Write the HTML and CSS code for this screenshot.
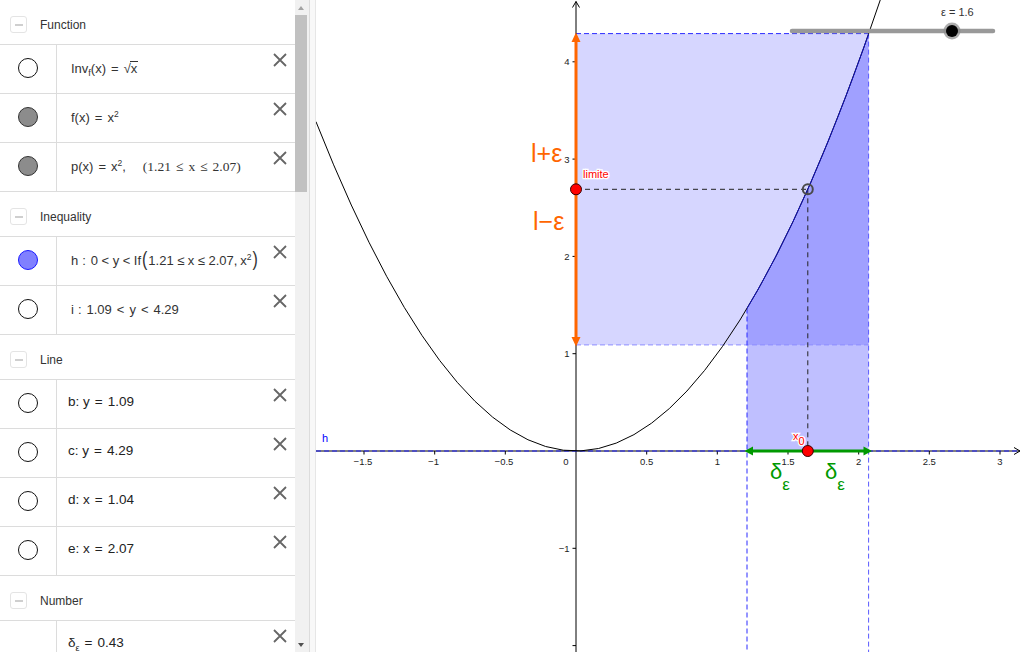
FILE: index.html
```html
<!DOCTYPE html>
<html>
<head>
<meta charset="utf-8">
<title>Limit</title>
<link rel="stylesheet" href="styles.css">
</head>
<body>
<div class="algebra">
  <div class="group-head"><span class="toggle"></span><span class="group-title">Function</span></div>
  <div class="item">
    <div class="marble-cell"><span class="marble"></span></div>
    <div class="expr"><span class="math">Inv<sub>f</sub>(x)<span class="rel">=</span><span class="rad">√<span class="ov">x</span></span></span></div>
    <svg class="del" viewBox="0 0 14 14"><path d="M1 1L13 13M13 1L1 13"/></svg>
  </div>
  <div class="item">
    <div class="marble-cell"><span class="marble gray"></span></div>
    <div class="expr"><span class="math">f(x)<span class="rel">=</span>x<sup>2</sup></span></div>
    <svg class="del" viewBox="0 0 14 14"><path d="M1 1L13 13M13 1L1 13"/></svg>
  </div>
  <div class="item">
    <div class="marble-cell"><span class="marble gray"></span></div>
    <div class="expr"><span class="math">p(x)<span class="rel">=</span>x<sup>2</sup>,<span class="gap"></span><span class="serif">(1.21<span class="rel">≤</span>x<span class="rel">≤</span>2.07)</span></span></div>
    <svg class="del" viewBox="0 0 14 14"><path d="M1 1L13 13M13 1L1 13"/></svg>
  </div>

  <div class="group-head"><span class="toggle"></span><span class="group-title">Inequality</span></div>
  <div class="item">
    <div class="marble-cell"><span class="marble blue"></span></div>
    <div class="expr tight"><span class="math">h<span class="colon">:</span>0<span class="rel">&lt;</span>y<span class="rel">&lt;</span>If<span class="big">(</span>1.21<span class="rel">≤</span>x<span class="rel">≤</span>2.07,<span class="thin"></span>x<sup>2</sup><span class="big">)</span></span></div>
    <svg class="del" viewBox="0 0 14 14"><path d="M1 1L13 13M13 1L1 13"/></svg>
  </div>
  <div class="item">
    <div class="marble-cell"><span class="marble"></span></div>
    <div class="expr"><span class="math">i<span class="colon">:</span>1.09<span class="rel">&lt;</span>y<span class="rel">&lt;</span>4.29</span></div>
    <svg class="del" viewBox="0 0 14 14"><path d="M1 1L13 13M13 1L1 13"/></svg>
  </div>

  <div class="group-head"><span class="toggle"></span><span class="group-title">Line</span></div>
  <div class="item">
    <div class="marble-cell"><span class="marble"></span></div>
    <div class="expr plain"><span class="math">b: y<span class="rel">=</span>1.09</span></div>
    <svg class="del" viewBox="0 0 14 14"><path d="M1 1L13 13M13 1L1 13"/></svg>
  </div>
  <div class="item">
    <div class="marble-cell"><span class="marble"></span></div>
    <div class="expr plain"><span class="math">c: y<span class="rel">=</span>4.29</span></div>
    <svg class="del" viewBox="0 0 14 14"><path d="M1 1L13 13M13 1L1 13"/></svg>
  </div>
  <div class="item">
    <div class="marble-cell"><span class="marble"></span></div>
    <div class="expr plain"><span class="math">d: x<span class="rel">=</span>1.04</span></div>
    <svg class="del" viewBox="0 0 14 14"><path d="M1 1L13 13M13 1L1 13"/></svg>
  </div>
  <div class="item">
    <div class="marble-cell"><span class="marble"></span></div>
    <div class="expr plain"><span class="math">e: x<span class="rel">=</span>2.07</span></div>
    <svg class="del" viewBox="0 0 14 14"><path d="M1 1L13 13M13 1L1 13"/></svg>
  </div>

  <div class="group-head"><span class="toggle"></span><span class="group-title">Number</span></div>
  <div class="item">
    <div class="marble-cell"></div>
    <div class="expr plain last"><span class="math">δ<sub>ε</sub><span class="rel">=</span>0.43</span></div>
    <svg class="del" viewBox="0 0 14 14"><path d="M1 1L13 13M13 1L1 13"/></svg>
  </div>
</div>

<div class="scroll">
  <div class="arrow-box"><span class="arrow up"></span></div>
  <div class="thumb"></div>
  <div class="spacer"></div>
  <div class="arrow-box"><span class="arrow down"></span></div>
</div>
<div class="divider"></div>

<svg class="graph" viewBox="0 0 708 652" width="708" height="652">
  <!-- filled regions -->
  <rect x="260" y="33.6" width="292.6" height="311.3" class="fill-light"/>
  <path d="M431 451 L431 308.5 Q491.8 207.3 552.6 34.1 L552.6 451 Z" class="fill-h"/>

  <!-- dashed boundaries -->
  <line x1="260" y1="33.6" x2="552.6" y2="33.6" class="dash-blue"/>
  <line x1="260" y1="344.9" x2="552.6" y2="344.9" class="dash-light"/>
  <line x1="552.6" y1="33.6" x2="552.6" y2="652" class="dash-mid"/>
  <line x1="431" y1="308.5" x2="431" y2="652" class="dash-blue"/>

  <!-- axes -->
  <line x1="0" y1="451" x2="704" y2="451" class="axis"/>
  <path d="M698 447.5 L704 451 L698 454.5" class="axis"/>
  <line x1="260" y1="652" x2="260" y2="1.5" class="axis"/>
  <path d="M256.5 7.5 L260 1.5 L263.5 7.5" class="axis"/>

  <!-- x ticks -->
  <path class="axis" d="M48 451v3.5M118.7 451v3.5M189.3 451v3.5M330.7 451v3.5M401.3 451v3.5M472 451v3.5M542.7 451v3.5M613.3 451v3.5M684 451v3.5"/>
  <!-- y ticks -->
  <path class="axis" d="M256.5 61.8h3.5M256.5 159.1h3.5M256.5 256.4h3.5M256.5 353.7h3.5M256.5 548.3h3.5M256.5 645.6h3.5"/>

  <g class="tick-label" text-anchor="middle">
    <text x="47" y="465">−1.5</text>
    <text x="117.5" y="465">−1</text>
    <text x="188" y="465">−0.5</text>
    <text x="250" y="465">0</text>
    <text x="330.7" y="465">0.5</text>
    <text x="401.3" y="465">1</text>
    <text x="472" y="465">1.5</text>
    <text x="542.7" y="465">2</text>
    <text x="613.3" y="465">2.5</text>
    <text x="684" y="465">3</text>
  </g>
  <g class="tick-label" text-anchor="end">
    <text x="253.5" y="65.3">4</text>
    <text x="253.5" y="162.6">3</text>
    <text x="253.5" y="259.9">2</text>
    <text x="253.5" y="357.2">1</text>
    <text x="253.5" y="551.8">−1</text>
  </g>

  <!-- blue dashed h boundary along x-axis -->
  <line x1="0" y1="451" x2="704" y2="451" class="dash-axis"/>

  <!-- black dashed guides -->
  <line x1="260" y1="189.3" x2="491.8" y2="189.3" class="dash-black"/>
  <line x1="491.8" y1="189.3" x2="491.8" y2="451" class="dash-black"/>

  <!-- parabola -->
  <path d="M-0.05 121.6 Q282.6 837.7 565.3 -3" class="curve"/>
  <path d="M431 308.5 Q491.8 207.3 552.6 34.1" class="curve-blue"/>

  <!-- orange vector -->
  <line x1="260" y1="41" x2="260" y2="338" class="orange"/>
  <path d="M260 32.5 L264.5 42 L255.5 42 Z" class="orange-head"/>
  <path d="M260 346.5 L264.5 337 L255.5 337 Z" class="orange-head"/>

  <!-- green segment -->
  <line x1="436" y1="451" x2="548" y2="451" class="green"/>
  <path d="M428.5 451 L437 446.5 L437 455.5 Z" class="green-head"/>
  <path d="M556 451 L547.5 446.5 L547.5 455.5 Z" class="green-head"/>

  <!-- slider -->
  <line x1="476" y1="31" x2="677" y2="31" class="slider-line"/>
  <circle cx="636" cy="31" r="8.5" class="slider-halo"/>
  <circle cx="636" cy="31" r="6" fill="#000"/>
  <text x="625" y="16" class="slider-label">ε = 1.6</text>

  <!-- points -->
  <circle cx="491.8" cy="189.3" r="5" class="open-pt"/>
  <circle cx="260" cy="189.3" r="5.5" class="red-pt"/>
  <circle cx="491.8" cy="451" r="5.5" class="red-pt"/>

  <!-- labels -->
  <text x="267" y="178" class="pt-label">limite</text>
  <text x="477" y="439.5" class="pt-label">x<tspan dy="5.5">0</tspan></text>
  <text x="6" y="442" class="h-label">h</text>

  <text x="215" y="162" class="orange-label">l+ε</text>
  <text x="217" y="230" class="orange-label">l−ε</text>

  <text x="454" y="479" class="green-label">δ<tspan class="green-sub" dy="11">ε</tspan></text>
  <text x="509" y="479" class="green-label">δ<tspan class="green-sub" dy="11">ε</tspan></text>
</svg>
</body>
</html>
```

FILE: styles.css
```css
* {
  box-sizing: border-box;
  margin: 0;
  padding: 0;
}

html, body {
  width: 1024px;
  height: 652px;
  overflow: hidden;
}

body {
  display: flex;
  font-family: "Liberation Sans", Arial, sans-serif;
  background: #fff;
  color: #333;
}

/* ---------- algebra view ---------- */
.algebra {
  width: 295px;
  height: 652px;
  flex: none;
  overflow: hidden;
  display: flex;
  flex-direction: column;
  background: #fff;
}

.group-head {
  height: 45px;
  flex: none;
  display: flex;
  align-items: center;
  padding-top: 5px;
  border-bottom: 1px solid #dcdcdc;
}

.toggle {
  width: 17px;
  height: 17px;
  margin-left: 10px;
  border: 1px solid #e4e4e4;
  border-radius: 3px;
  display: flex;
  align-items: center;
  justify-content: center;
}

.toggle::before {
  content: "";
  width: 8px;
  height: 2px;
  background: #cfcfcf;
}

.group-title {
  margin-left: 13px;
  font-size: 12px;
  color: #333;
}

.item {
  height: 49px;
  flex: none;
  display: flex;
  border-bottom: 1px solid #dcdcdc;
}

.marble-cell {
  width: 57px;
  flex: none;
  border-right: 1px solid #dcdcdc;
  display: flex;
  align-items: center;
  justify-content: center;
  padding-bottom: 3px;
}

.marble {
  width: 20px;
  height: 20px;
  border-radius: 50%;
  border: 1px solid #111;
  background: #fff;
}

.marble.gray {
  background: #8c8c8c;
  border-color: #333;
}

.marble.blue {
  background: #8080ff;
  border-color: #1a1aff;
}

.expr {
  flex: 1;
  display: flex;
  align-items: center;
  padding-left: 14px;
  font-size: 13px;
  color: #333;
  white-space: nowrap;
}

.math {
  line-height: 16px;
}

.expr.plain {
  padding-left: 11px;
  padding-bottom: 4px;
  font-size: 13.5px;
  color: #222;
}

.rel {
  margin: 0 5px;
}

.tight .rel {
  margin: 0 3.5px;
}

.colon {
  margin: 0 5px 0 4px;
}

.gap {
  display: inline-block;
  width: 17px;
}

.thin {
  display: inline-block;
  width: 3px;
}

.serif {
  font-family: "Liberation Serif", "Times New Roman", serif;
  font-size: 13.5px;
}

sub {
  font-size: 9px;
  vertical-align: -3px;
  line-height: 0;
}

.plain sub {
  vertical-align: -4px;
}

sup {
  font-size: 8.5px;
  vertical-align: 5px;
  line-height: 0;
}

.big {
  display: inline-block;
  font-size: 16px;
  line-height: 14px;
  transform: scaleY(1.25);
  margin: 0 1px;
}

.rad {
  white-space: nowrap;
}

.ov {
  display: inline-block;
  border-top: 1px solid #333;
  padding: 0 1px;
  line-height: 13px;
  margin-left: -1px;
}

.del {
  width: 14px;
  height: 14px;
  flex: none;
  margin: 8px 8px 0 0;
}

.del path {
  stroke: #666;
  stroke-width: 1.8;
  fill: none;
}

/* ---------- scrollbar ---------- */
.scroll {
  width: 14px;
  height: 652px;
  flex: none;
  background: #f1f1f1;
  display: flex;
  flex-direction: column;
  align-items: flex-start;
}

.arrow-box {
  height: 15px;
  width: 12px;
  display: flex;
  align-items: center;
  justify-content: center;
}

.arrow {
  width: 0;
  height: 0;
  border-left: 3.5px solid transparent;
  border-right: 3.5px solid transparent;
}

.arrow.up {
  border-bottom: 4px solid #a3a3a3;
}

.arrow.down {
  border-top: 4px solid #505050;
}

.thumb {
  width: 12px;
  height: 177px;
  background: #c1c1c1;
}

.spacer {
  flex: 1;
}

.divider {
  width: 7px;
  height: 652px;
  flex: none;
  background: #f8f8f8;
  border-left: 1px solid #dcdcdc;
  border-right: 1px solid #e6e6e6;
}

/* ---------- graphics view ---------- */
.graph {
  width: 708px;
  height: 652px;
  flex: none;
  display: block;
  background: #fff;
}

.fill-light {
  fill: #0000ff;
  fill-opacity: 0.16;
}

.fill-h {
  fill: #0000ff;
  fill-opacity: 0.25;
}

.dash-blue {
  stroke: #2a2aff;
  stroke-width: 1;
  stroke-dasharray: 5 3;
}

.dash-mid {
  stroke: #5a5aff;
  stroke-width: 1;
  stroke-dasharray: 5 3;
}

.dash-light {
  stroke: #8c8cff;
  stroke-width: 1;
  stroke-dasharray: 5 3;
}

.dash-axis {
  stroke: #1e1eff;
  stroke-width: 1.2;
  stroke-dasharray: 5 3;
}

.dash-black {
  stroke: #222;
  stroke-width: 1;
  stroke-dasharray: 5 4;
}

.axis {
  stroke: #000;
  stroke-width: 1;
  fill: none;
}

.tick-label {
  font-family: "Liberation Sans", Arial, sans-serif;
  font-size: 9.5px;
  fill: #222;
}

.curve {
  stroke: #000;
  stroke-width: 1;
  fill: none;
}

.curve-blue {
  stroke: #1010c0;
  stroke-width: 1;
  fill: none;
}

.orange {
  stroke: #ff6600;
  stroke-width: 3;
}

.orange-head {
  fill: #ff6600;
}

.green {
  stroke: #009900;
  stroke-width: 3;
}

.green-head {
  fill: #009900;
}

.slider-line {
  stroke: #999;
  stroke-width: 4.5;
  stroke-linecap: round;
}

.slider-halo {
  fill: #8a8a8a;
  fill-opacity: 0.7;
}

.slider-label {
  font-family: "Liberation Sans", Arial, sans-serif;
  font-size: 11px;
  fill: #333;
}

.open-pt {
  fill: none;
  stroke: #4a4a4a;
  stroke-width: 2;
}

.red-pt {
  fill: #ff0000;
  stroke: #3a0000;
  stroke-width: 1;
}

.pt-label {
  font-family: "Liberation Sans", Arial, sans-serif;
  font-size: 11px;
  fill: #ff0000;
  stroke: #fff;
  stroke-width: 2.5;
  paint-order: stroke;
}

.h-label {
  font-family: "Liberation Sans", Arial, sans-serif;
  font-size: 11px;
  fill: #0000ff;
}

.orange-label {
  font-family: "Liberation Sans", Arial, sans-serif;
  font-size: 25px;
  fill: #ff6600;
}

.green-label {
  font-family: "Liberation Sans", Arial, sans-serif;
  font-size: 22px;
  fill: #009900;
}

.green-sub {
  font-size: 17px;
}
```
